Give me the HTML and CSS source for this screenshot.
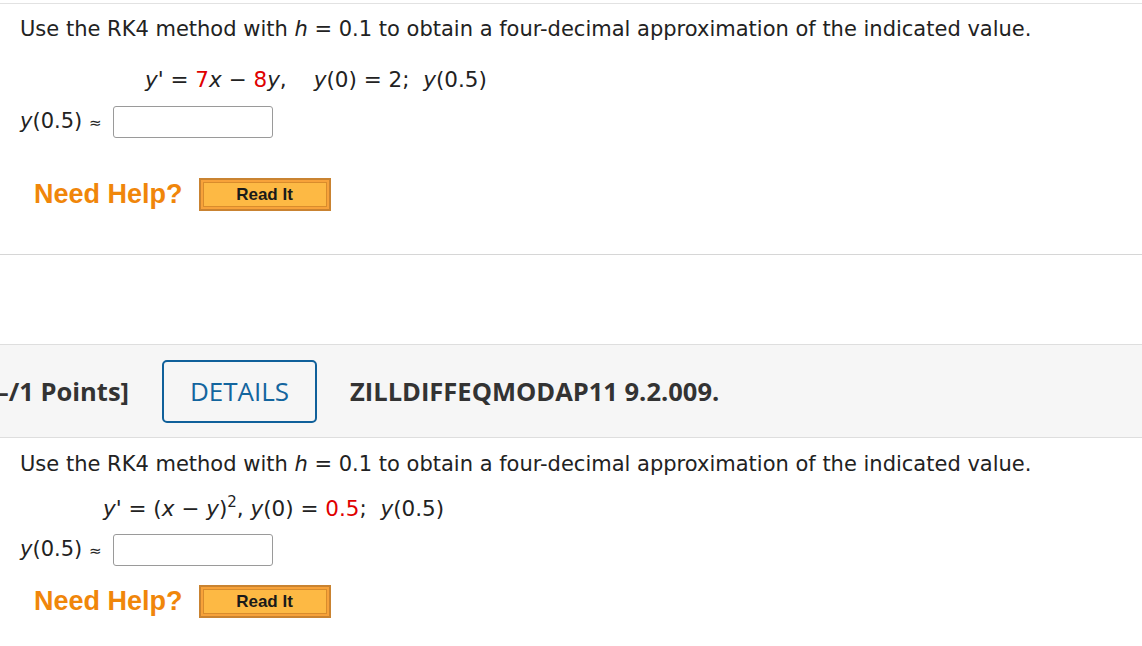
FILE: index.html
```html
<!DOCTYPE html>
<html>
<head>
<meta charset="utf-8">
<link rel="stylesheet" href="styles.css">
</head>
<body>
<div class="top-gap"></div>
<section class="q q1">
  <p class="prompt">Use the RK4 method with <i>h</i> = 0.1 to obtain a four-decimal approximation of the indicated value.</p>
  <div class="eq eq1"><i>y'</i> = <span class="red">7</span><i>x</i> − <span class="red">8</span><i>y</i>,<span class="sp"></span><i>y</i>(0) = 2;&nbsp; <i>y</i>(0.5)</div>
  <div class="answer"><span class="lbl"><i>y</i>(0.5) <span class="approx">≈</span></span><span class="box"></span></div>
  <div class="help help1"><span class="need">Need Help?</span><span class="readit"><span class="readit-in">Read It</span></span></div>
</section>
<div class="gap"></div>
<header class="qhead">
  <span class="points">–/1 Points]</span>
  <span class="details">DETAILS</span>
  <span class="code">ZILLDIFFEQMODAP11 9.2.009.</span>
</header>
<section class="q q2">
  <p class="prompt">Use the RK4 method with <i>h</i> = 0.1 to obtain a four-decimal approximation of the indicated value.</p>
  <div class="eq eq2"><i>y'</i> = (<i>x</i> − <i>y</i>)<sup>2</sup>, <i>y</i>(0) = <span class="red">0.5</span>;&nbsp; <i>y</i>(0.5)</div>
  <div class="answer"><span class="lbl"><i>y</i>(0.5) <span class="approx">≈</span></span><span class="box"></span></div>
  <div class="help help2"><span class="need">Need Help?</span><span class="readit"><span class="readit-in">Read It</span></span></div>
</section>
</body>
</html>
```
FILE: styles.css
```css
html, body { margin: 0; padding: 0; background: #fff; }
body { font-family: "DejaVu Sans", Verdana, sans-serif; color: #222; font-size: 21px; overflow: hidden; }
.top-gap { height: 3px; }
.q1 { border-top: 1px solid #e2e2e2; border-bottom: 1px solid #d6d6d6; padding: 0 0 0 20px; height: 252px; box-sizing: border-box; }
.prompt { margin: 0; line-height: 24px; }
.q1 .prompt { padding-top: 13px; }
.eq { line-height: 24px; font-size: 21.5px; }
.eq1 { margin: 27px 0 0 125px; }
.sp { display: inline-block; width: 27px; }
.red { color: #e00000; }
.answer { display: flex; align-items: center; margin-top: 14px; }
.lbl { line-height: 24px; }
.approx { font-size: 15px; }
.box { width: 158px; height: 30px; border: 1px solid #9a9a9a; border-radius: 3px; margin-left: 12px; background: #fff; }
.help { display: flex; align-items: center; margin-left: 14px; }
.help1 { margin-top: 40px; }
.need { font-family: "Liberation Sans", Arial, sans-serif; font-weight: bold; font-size: 27px; color: #f0860a; }
.readit { display: inline-block; margin-left: 16px; border: 2px solid #c98331; background: #f7a23a; padding: 2px; width: 132px; box-sizing: border-box; }
.readit-in { display: block; background: #fdb944; border: 1px solid #d98c2c; text-align: center; font-family: "Liberation Sans", Arial, sans-serif; font-weight: bold; font-size: 17px; color: #1a1a1a; line-height: 23px; }
.gap { height: 89px; }
.qhead { height: 94px; box-sizing: border-box; background: #f6f6f6; border-top: 1px solid #dedede; border-bottom: 1px solid #dedede; display: flex; align-items: center; font-family: "Open Sans", sans-serif; font-size: 25.5px; color: #333; }
.points { font-weight: bold; margin-left: -4px; }
.details { margin-left: 33px; border: 2px solid #10609a; border-radius: 5px; color: #13659e; width: 155px; height: 63px; box-sizing: border-box; display: flex; align-items: center; justify-content: center; font-size: 26px; }
.code { font-weight: bold; margin-left: 33px; }
.q2 { padding-left: 20px; }
.q2 .prompt { padding-top: 14px; }
.eq2 { margin: 21px 0 0 83px; }
sup { font-size: 15px; line-height: 0; vertical-align: 9px; }
.q2 .answer { margin-top: 13px; }
.help2 { margin-top: 19px; }
```
